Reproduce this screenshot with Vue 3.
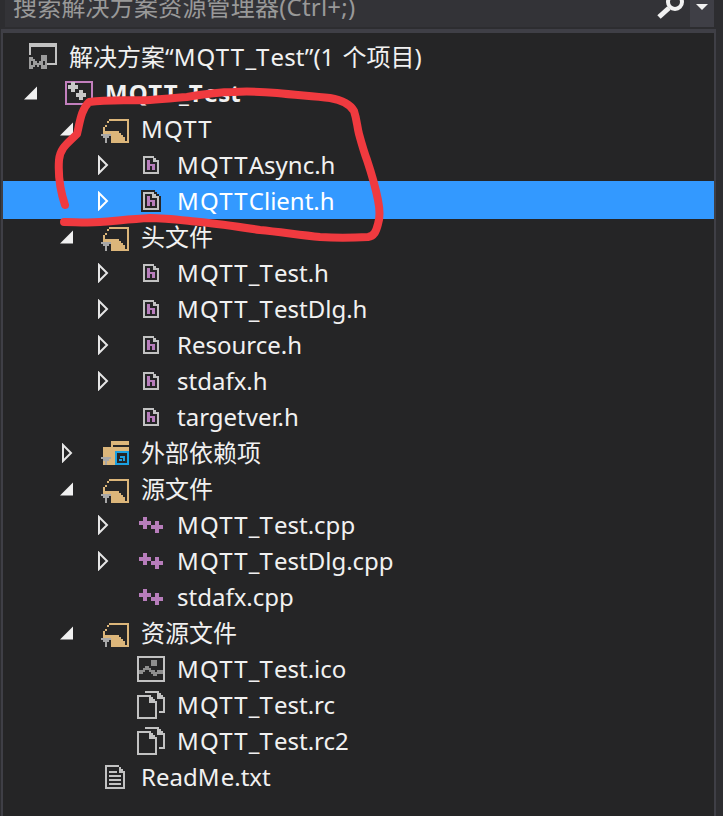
<script setup>
const rows = [
  { icon: 'solution', text: '解决方案“MQTT_Test”(1 个项目)', tx: 69, ix: 29, wide: true },
  { arrow: 'open', ax: 23, icon: 'project', text: 'MQTT_Test', bold: true, ix: 65, tx: 105 },
  { arrow: 'open', ax: 59, icon: 'filter', text: 'MQTT', ix: 101, tx: 141 },
  { arrow: 'closed', ax: 97, icon: 'h', text: 'MQTTAsync.h', ix: 143, tx: 177 },
  { arrow: 'closed', ax: 97, icon: 'hsel', text: 'MQTTClient.h', ix: 141, tx: 177, selected: true },
  { arrow: 'open', ax: 59, icon: 'filter', text: '头文件', ix: 101, tx: 141 },
  { arrow: 'closed', ax: 97, icon: 'h', text: 'MQTT_Test.h', ix: 143, tx: 177 },
  { arrow: 'closed', ax: 97, icon: 'h', text: 'MQTT_TestDlg.h', ix: 143, tx: 177 },
  { arrow: 'closed', ax: 97, icon: 'h', text: 'Resource.h', ix: 143, tx: 177 },
  { arrow: 'closed', ax: 97, icon: 'h', text: 'stdafx.h', ix: 143, tx: 177 },
  { icon: 'h', text: 'targetver.h', ix: 143, tx: 177 },
  { arrow: 'closed', ax: 61, icon: 'deps', text: '外部依赖项', ix: 101, tx: 141 },
  { arrow: 'open', ax: 59, icon: 'filter', text: '源文件', ix: 101, tx: 141 },
  { arrow: 'closed', ax: 97, icon: 'cpp', text: 'MQTT_Test.cpp', ix: 139, tx: 177 },
  { arrow: 'closed', ax: 97, icon: 'cpp', text: 'MQTT_TestDlg.cpp', ix: 139, tx: 177 },
  { icon: 'cpp', text: 'stdafx.cpp', ix: 139, tx: 177 },
  { arrow: 'open', ax: 59, icon: 'filter', text: '资源文件', ix: 101, tx: 141 },
  { icon: 'ico', text: 'MQTT_Test.ico', ix: 137, tx: 177 },
  { icon: 'rc', text: 'MQTT_Test.rc', ix: 137, tx: 177 },
  { icon: 'rc', text: 'MQTT_Test.rc2', ix: 137, tx: 177 },
  { icon: 'txt', text: 'ReadMe.txt', ix: 105, tx: 141 },
]
const PANEL_X = 3
const rowStyle = (r) => ({ paddingLeft: r.ix - PANEL_X + 'px' })
const arrowStyle = (r) => ({ left: r.ax - PANEL_X + 'px' })
const textStyle = (r) => ({ left: r.tx - PANEL_X + 'px' })
// The reference's UI font sets the capitals M, Q and T wider than Noto Sans does.
const segments = (t) => t.split(/([MQT]+)/).filter(Boolean).map((s) => ({ s, caps: /^[MQT]+$/.test(s) }))
</script>

<template>
  <div class="app">
    <div class="searchbar">
      <div class="search-input">
        <span class="placeholder">搜索解决方案资源管理器(Ctrl+;)</span>
        <svg class="mag" width="32" height="22" viewBox="0 0 32 22">
          <circle cx="18" cy="2" r="7" fill="none" stroke="#f1f1f1" stroke-width="4" />
          <path d="M12 8 L2 17" stroke="#f1f1f1" stroke-width="5" fill="none" />
        </svg>
      </div>
      <div class="search-drop"><span class="tri"></span></div>
    </div>
    <div class="tree">
      <div v-for="r in rows" :key="r.text" class="row" :class="{ selected: r.selected }" :style="rowStyle(r)">
        <svg v-if="r.arrow === 'open'" class="arrow" :style="arrowStyle(r)" width="16" height="16" viewBox="0 0 16 16">
          <path d="M1 14.5 L14 14.5 L14 1.5 Z" fill="#f1f1f1" />
        </svg>
        <svg v-if="r.arrow === 'closed'" class="arrow" :style="arrowStyle(r)" width="12" height="20" viewBox="0 0 12 20">
          <path d="M2 2 L2 18 L10 10 Z" fill="none" :stroke="r.selected ? '#ffffff' : '#e6e6e6'" stroke-width="2" />
        </svg>

        <svg v-if="r.icon === 'solution'" class="ic" width="28" height="28" viewBox="0 0 28 28" shape-rendering="crispEdges">
          <path d="M0 0 H28 V4 H2 V12 H0 Z M26 4 H28 V22 H18 V20 H26 Z" fill="#c2c2c2" />
          <path d="M0 14 H4 V16 H6 V18 H8 V20 H10 V18 H12 V12 H18 V26 H12 V22 H10 V24 H8 V22 H6 V24 H4 V26 H0 Z M2 18 V22 H4 V18 Z M14 18 V22 H16 V18 Z" fill="#9c9c9c" />
        </svg>
        <svg v-else-if="r.icon === 'project'" class="ic" width="28" height="24" viewBox="0 0 28 24" shape-rendering="crispEdges">
          <path d="M0 0 H28 V24 H0 Z M2 2 V22 H26 V2 Z" fill="#c27fbd" />
          <path d="M6 1 H10 V4 H13 V8 H10 V11 H6 V8 H3 V4 H6 Z M14 9 H18 V12 H21 V16 H18 V19 H14 V16 H11 V12 H14 Z" fill="#c8c8c8" />
        </svg>
        <svg v-else-if="r.icon === 'filter'" class="ic shifted" width="28" height="24" viewBox="0 0 28 24" shape-rendering="crispEdges">
          <path d="M8 0 H28 V24 H10 V16 H2 V8 H4 V6 H6 V2 H8 Z M10 2 H8 V4 H6 V8 H4 V12 H18 V14 H20 V16 H22 V18 H24 V22 H26 V2 Z" fill="#dcb67a" />
          <path d="M0 15 H10 V17 H8 V19 H6 V24 H4 V19 H2 V17 H0 Z" fill="#a8a8a8" />
        </svg>
        <svg v-else-if="r.icon === 'deps'" class="ic" width="28" height="24" viewBox="0 0 28 24" shape-rendering="crispEdges">
          <path d="M10 0 H28 V4 H12 V6 H28 V10 H14 V24 H2 V14 H2 V6 H10 Z" fill="#dcb67a" />
          <path d="M0 16 H10 V18 H8 V20 H6 V24 H4 V20 H2 V18 H0 Z" fill="#a8a8a8" />
          <path d="M14 10 H28 V24 H14 Z" fill="#1ba1e2" />
          <path d="M16 12 H26 V22 H16 Z" fill="#252526" />
          <path d="M19 15 H24 V20 H22 V17 H19 Z M18 18 H21 V20 H18 Z" fill="#1ba1e2" />
        </svg>
        <svg v-else-if="r.icon === 'h'" class="ic" width="16" height="18" viewBox="0 0 16 18" shape-rendering="crispEdges">
          <path d="M0 0 H11 V2 H13 V4 H16 V18 H0 Z M2 2 V16 H14 V6 H10 V2 Z" fill="#c2c2c2" />
          <path d="M4 4 H7 V8 H12 V14 H9 V10 H7 V14 H4 Z" fill="#b77dbb" />
        </svg>
        <svg v-else-if="r.icon === 'hsel'" class="ic" width="20" height="22" viewBox="0 0 20 22" shape-rendering="crispEdges">
          <path d="M0 0 H14 V2 H16 V4 H18 V6 H20 V22 H0 Z" fill="#252526" />
          <path d="M2 2 H13 V4 H15 V6 H18 V20 H2 Z" fill="#c2c2c2" />
          <path d="M4 4 H11 V8 H16 V18 H4 Z" fill="#252526" />
          <path d="M6 6 H9 V10 H14 V16 H11 V12 H9 V16 H6 Z" fill="#b77dbb" />
        </svg>
        <svg v-else-if="r.icon === 'cpp'" class="ic" width="24" height="16" viewBox="0 0 24 16" shape-rendering="crispEdges">
          <path d="M4 0 H8 V4 H12 V8 H8 V12 H4 V8 H0 V4 H4 Z M16 4 H20 V8 H24 V12 H20 V16 H16 V12 H12 V8 H16 Z" fill="#b77dbb" />
        </svg>
        <svg v-else-if="r.icon === 'ico'" class="ic" width="28" height="26" viewBox="0 0 28 26" shape-rendering="crispEdges">
          <path d="M0 0 H28 V26 H0 Z M2 2 V24 H26 V2 Z" fill="#c2c2c2" />
          <path d="M14 4 H20 V10 H14 Z" fill="#8e8e8e" />
          <path d="M2 14 H6 V12 H8 V10 H12 V12 H14 V14 H18 V16 H20 V14 H26 V18 H20 V20 H16 V18 H14 V16 H12 V14 H8 V16 H6 V18 H2 Z" fill="#8e8e8e" />
        </svg>
        <svg v-else-if="r.icon === 'rc'" class="ic" width="28" height="28" viewBox="0 0 28 28" shape-rendering="crispEdges">
          <path d="M0 4 H14 V6 H16 V8 H18 V10 H20 V28 H0 Z M2 6 V26 H18 V12 H12 V6 Z" fill="#c2c2c2" />
          <path d="M8 0 H22 V2 H24 V4 H26 V6 H28 V22 H22 V20 H26 V8 H20 V2 H8 Z" fill="#c2c2c2" />
        </svg>
        <svg v-else-if="r.icon === 'txt'" class="ic" width="20" height="24" viewBox="0 0 20 24" shape-rendering="crispEdges">
          <path d="M0 0 H14 V2 H16 V4 H18 V6 H20 V24 H0 Z M2 2 V22 H18 V8 H14 V2 Z" fill="#c2c2c2" />
          <path d="M4 6 H12 V8 H4 Z M4 10 H16 V12 H4 Z M4 14 H16 V16 H4 Z M4 18 H16 V20 H4 Z" fill="#c2c2c2" />
        </svg>

        <span class="label" :class="{ bold: r.bold, wide: r.wide }" :style="textStyle(r)"><span
          v-for="(p, i) in segments(r.text)" :key="i" :class="{ caps: p.caps }">{{ p.s }}</span></span>
      </div>
    </div>
    <svg class="ink" width="723" height="816" viewBox="0 0 723 816">
      <path d="M65 205 C60 190 58 175 59 160 C60 148 68 143 77 134 C80 122 81 110 89 102 C110 99 130 101 150 100 C165 99 175 98 187 97 C205 94 220 92 233 92 C250 91 265 92 277 93 C295 95 312 96 330 98 C342 100 350 104 354 111 C357 120 357 126 359 134 C362 145 364 152 367 160 C372 175 376 190 378 200 C380 210 380 218 378 224 C376 232 374 236 368 237 C350 238 335 238 320 237 C300 235 280 232 260 230 C240 227 220 224 200 222 C180 220 165 218 150 218 C130 219 115 221 100 222 C88 223 75 222 64 222" fill="none" stroke="#f03a3f" stroke-width="8" stroke-linecap="round" stroke-linejoin="round" />
    </svg>
  </div>
</template>

<style scoped>
.app {
  position: relative;
  width: 723px;
  height: 816px;
  overflow: hidden;
  background: #2d2d30;
  font-family: "Noto Sans", "Noto Sans CJK SC", sans-serif;
}
.searchbar {
  display: flex;
  height: 27px;
  margin: 0 9px 0 5px;
}
.search-input {
  flex: 1;
  position: relative;
  display: flex;
  align-items: center;
  background: #333337;
  overflow: hidden;
}
.placeholder {
  margin: -14px 0 0 8px;
  font-size: 24px;
  line-height: 36px;
  color: #999999;
  white-space: nowrap;
  letter-spacing: 0.2px;
}
.mag {
  position: absolute;
  right: 1px;
  top: 0;
}
.search-drop {
  width: 24px;
  background: #3f3f46;
  display: flex;
  justify-content: center;
  padding-top: 4px;
  box-sizing: border-box;
}
.tri {
  width: 0;
  height: 0;
  border-left: 6px solid transparent;
  border-right: 6px solid transparent;
  border-top: 6px solid #f1f1f1;
}
.tree {
  margin: 2px 7px 0 1px;
  height: 787px;
  padding-top: 6px;
  background: #252526;
  border: solid #3f3f46;
  border-width: 4px 2px 0;
  box-sizing: border-box;
}
.row {
  position: relative;
  height: 36px;
  display: flex;
  align-items: center;
  color: #f1f1f1;
}
.row.selected {
  background: #3399ff;
  box-shadow: 0 -2px 0 #3399ff;
  color: #ffffff;
}
.arrow {
  position: absolute;
  top: 50%;
  transform: translateY(-50%);
}
.ic {
  flex: none;
}
.shifted {
  transform: translateY(2px);
}
.label {
  position: absolute;
  top: 0;
  font-size: 24px;
  line-height: 36px;
  white-space: nowrap;
}
.wide {
  word-spacing: 2px;
}
.caps {
  letter-spacing: 1.2px;
}
.bold {
  font-weight: 700;
}
.ink {
  position: absolute;
  left: 0;
  top: 0;
  pointer-events: none;
}
</style>
